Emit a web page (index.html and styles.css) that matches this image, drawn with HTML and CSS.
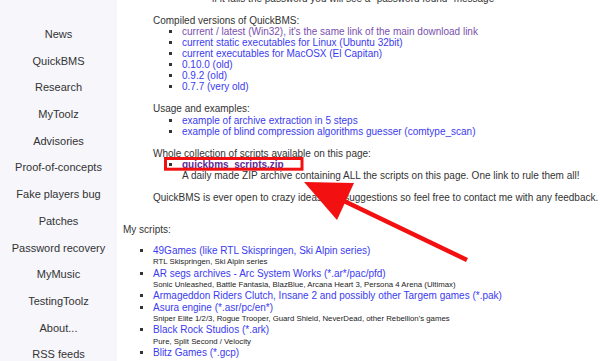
FILE: index.html
```html
<!DOCTYPE html>
<html>
<head>
<meta charset="utf-8">
<link rel="stylesheet" href="styles.css">
</head>
<body>
<div class="page">
<div class="menu">
<a class="menuitem" href="#">News</a>
<a class="menuitem" href="#">QuickBMS</a>
<a class="menuitem" href="#">Research</a>
<a class="menuitem" href="#">MyToolz</a>
<a class="menuitem" href="#">Advisories</a>
<a class="menuitem" href="#">Proof-of-concepts</a>
<a class="menuitem" href="#">Fake players bug</a>
<a class="menuitem" href="#">Patches</a>
<a class="menuitem" href="#">Password recovery</a>
<a class="menuitem" href="#">MyMusic</a>
<a class="menuitem" href="#">TestingToolz</a>
<a class="menuitem" href="#">About...</a>
<a class="menuitem" href="#">RSS feeds</a>
</div>
<div class="content">
<div class="intro">
<p class="cutline">if it fails the password you will see a "password found" message</p>
<p>Compiled versions of QuickBMS:</p>
<ul class="dl">
<li><a class="seen" href="#">current / latest (Win32), it's the same link of the main download link</a></li>
<li><a href="#">current static executables for Linux (Ubuntu 32bit)</a></li>
<li><a href="#">current executables for MacOSX (El Capitan)</a></li>
<li><a href="#">0.10.0 (old)</a></li>
<li><a href="#">0.9.2 (old)</a></li>
<li><a href="#">0.7.7 (very old)</a></li>
</ul>
<p>Usage and examples:</p>
<ul class="dl">
<li><a href="#">example of archive extraction in 5 steps</a></li>
<li><a href="#">example of blind compression algorithms guesser (comtype_scan)</a></li>
</ul>
<p>Whole collection of scripts available on this page:</p>
<ul class="dl">
<li><a class="zip" href="#">quickbms_scripts.zip</a><br>A daily made ZIP archive containing ALL the scripts on this page. One link to rule them all!</li>
</ul>
<p>QuickBMS is ever open to crazy ideas and suggestions so feel free to contact me with any feedback.</p>
</div>
<p class="myscripts">My scripts:</p>
<ul class="scripts">
<li><a href="#">49Games (like RTL Skispringen, Ski Alpin series)</a><span class="games">RTL Skispringen, Ski Alpin series</span></li>
<li><a href="#">AR segs archives - Arc System Works (*.ar*/pac/pfd)</a><span class="games">Sonic Unleashed, Battle Fantasia, BlazBlue, Arcana Heart 3, Persona 4 Arena (Ultimax)</span></li>
<li><a href="#">Armageddon Riders Clutch, Insane 2 and possibly other Targem games (*.pak)</a></li>
<li><a href="#">Asura engine (*.asr/pc/en*)</a><span class="games">Sniper Elite 1/2/3, Rogue Trooper, Guard Shield, NeverDead, other Rebellion's games</span></li>
<li><a href="#">Black Rock Studios (*.ark)</a><span class="games">Pure, Split Second / Velocity</span></li>
<li><a href="#">Blitz Games (*.gcp)</a><span class="games">Fairly OddParents, Bad Dog, Barbie, Dead to Rights, Titanic, Wipeout</span></li>
</ul>
</div>
<svg class="mark" width="600" height="361" viewBox="0 0 600 361">
<rect x="165.5" y="158.5" width="136.5" height="10.7" fill="none" stroke="#f21010" stroke-width="3"/>
<line x1="467" y1="260" x2="344" y2="201" stroke="#f21010" stroke-width="4.5"/>
<polygon points="304,182 354,183 337,220" fill="#f21010"/>
</svg>
</div>
</body>
</html>
```

FILE: styles.css
```css
body
{
margin: 0;
font-family: "Liberation Sans", Arial, sans-serif;
color: #333;
background: #fff;
}
.page
{
display: flex;
height: 361px;
overflow: hidden;
position: relative;
}
.menu
{
width: 117px;
flex: none;
background: #f6f6fb;
padding-top: 21px;
display: flex;
flex-direction: column;
}
.menuitem
{
height: 26.7px;
line-height: 26.7px;
text-align: center;
font-size: 11px;
color: #333;
text-decoration: none;
white-space: nowrap;
}
.content
{
flex: 1;
padding-left: 6px;
font-size: 10px;
line-height: 11px;
}
.content a
{
color: #3b3bef;
text-decoration: none;
}
.content a.seen
{
color: #7a4fae;
}
.content a.zip
{
color: #5f2a92;
font-weight: bold;
}
.intro
{
padding-left: 30px;
margin-top: -7.5px;
line-height: 11.1px;
}
.intro p
{
margin: 0;
}
.intro .cutline
{
padding-left: 59px;
margin-bottom: 11.1px;
}
.dl
{
list-style: square;
margin: 0 0 11.1px;
padding-left: 29px;
}
.myscripts
{
margin: 21.2px 0 0;
}
.scripts
{
list-style: square;
margin: 9.5px 0 0;
padding-left: 30px;
line-height: 11.33px;
}
.games
{
display: block;
font-size: 7.8px;
color: #222;
}
.mark
{
position: absolute;
left: 0;
top: 0;
pointer-events: none;
}
```
